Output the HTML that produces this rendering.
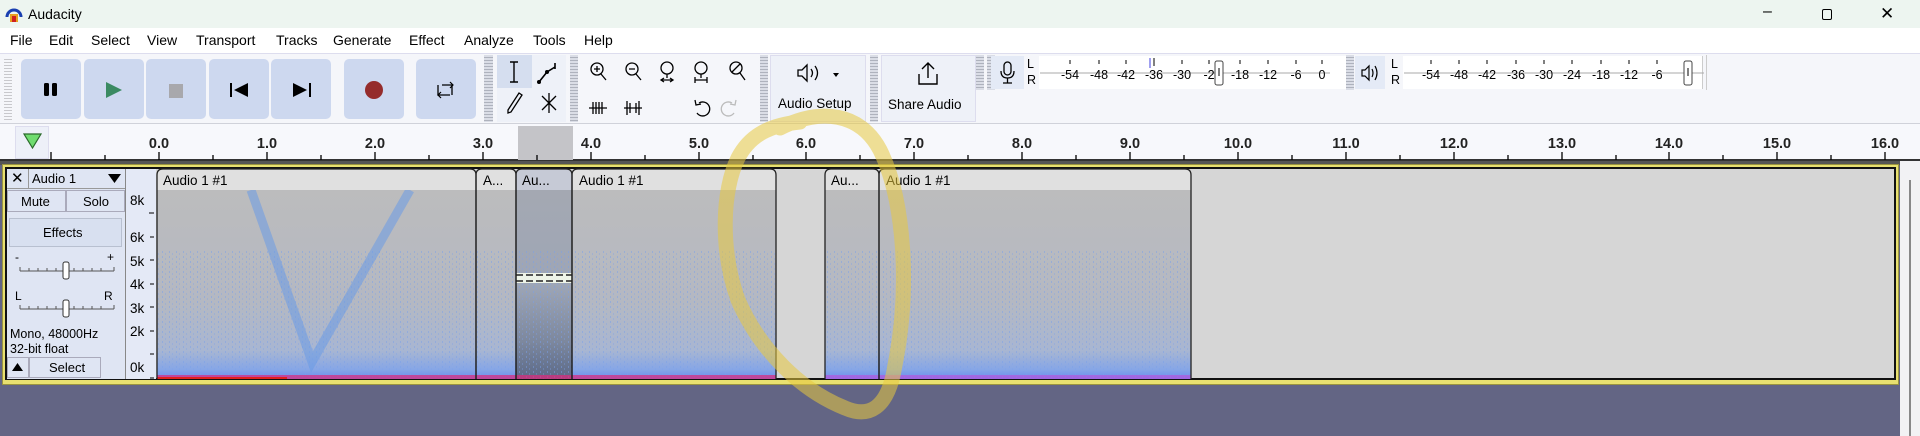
<!DOCTYPE html>
<html><head><meta charset="utf-8"><style>
*{margin:0;padding:0;box-sizing:border-box}
body{width:1920px;height:436px;overflow:hidden;background:#636584;font-family:"Liberation Sans",sans-serif;position:relative;color:#000}
.a{position:absolute}
.btn{position:absolute;background:#cdd8ef;border-radius:5px}
.t{position:absolute;white-space:nowrap}
</style></head><body>
<div class="a" style="left:0;top:0;width:1920px;height:28px;background:#edf5f0"></div>
<svg class="a" style="left:5px;top:5px" width="18" height="18"><path d="M2 12 A7 7 0 0 1 16 12" fill="none" stroke="#1a3fb0" stroke-width="3"/><rect x="5" y="9" width="8" height="8" fill="#e8a020"/><rect x="7" y="11" width="4" height="6" fill="#d02020"/></svg>
<div class="t" style="left:28px;top:6px;font-size:14px">Audacity</div>
<div class="t" style="left:1763px;top:3px;font-size:16px">–</div>
<div class="a" style="left:1822px;top:9px;width:10px;height:11px;border:1.5px solid #000;border-radius:2px"></div>
<div class="t" style="left:1880px;top:4px;font-size:17px">✕</div>
<div class="a" style="left:0;top:28px;width:1920px;height:25px;background:#fff"></div>
<div style="position:absolute;top:32px;font-size:14px">
<span class="t" style="left:10px">File</span><span class="t" style="left:49px">Edit</span><span class="t" style="left:91px">Select</span><span class="t" style="left:147px">View</span><span class="t" style="left:196px">Transport</span><span class="t" style="left:276px">Tracks</span><span class="t" style="left:333px">Generate</span><span class="t" style="left:409px">Effect</span><span class="t" style="left:464px">Analyze</span><span class="t" style="left:533px">Tools</span><span class="t" style="left:584px">Help</span></div>
<div class="a" style="left:0;top:53px;width:1920px;height:71px;background:#f5f6fa;border-top:1px solid #dde;border-bottom:1px solid #d0d2da"></div>
<div class="a" style="left:4px;top:57px;width:8px;height:63px;background:repeating-linear-gradient(#f5f6fa 0 2px,#c8c8cc 2px 3px)"></div>
<div class="btn" style="left:21px;top:59px;width:60px;height:60px"></div>
<div class="btn" style="left:84px;top:59px;width:60px;height:60px"></div>
<div class="btn" style="left:146px;top:59px;width:60px;height:60px"></div>
<div class="btn" style="left:209px;top:59px;width:60px;height:60px"></div>
<div class="btn" style="left:271px;top:59px;width:60px;height:60px"></div>
<div class="btn" style="left:344px;top:59px;width:60px;height:60px"></div>
<div class="btn" style="left:416px;top:59px;width:60px;height:60px"></div>
<svg class="a" style="left:0;top:53px" width="500" height="71">
<rect x="44" y="30" width="5" height="13" rx="1.5"/><rect x="52" y="30" width="5" height="13" rx="1.5"/>
<path d="M106 29 L122 37 L106 45Z" fill="#3b8a62"/>
<rect x="169" y="31" width="14" height="14" fill="#a8a8ac"/>
<rect x="230" y="30" width="2" height="14"/><path d="M248 30 L234 37 L248 44Z"/>
<path d="M293 30 L307 37 L293 44Z"/><rect x="309" y="30" width="2" height="14"/>
<circle cx="374" cy="37" r="9" fill="#952c2c"/>
<path d="M442 32 h10 v10 M450 42 h-12 v-10" fill="none" stroke="#000" stroke-width="1.3"/><path d="M450 29 l3 3 l-3 3 M441 39 l-3 3 l3 3" fill="none" stroke="#000" stroke-width="1.2"/>
</svg>
<div class="a" style="left:484px;top:55px;width:9px;height:67px;background:repeating-linear-gradient(#dadde6 0 2px,#aeb2bd 2px 3px)"></div>
<div class="a" style="left:497px;top:55px;width:35px;height:33px;background:#d5deef"></div>
<div class="a" style="left:532px;top:55px;width:34px;height:33px;background:#eef1f8"></div>
<div class="a" style="left:497px;top:88px;width:35px;height:34px;background:#eef1f8"></div>
<div class="a" style="left:532px;top:88px;width:34px;height:34px;background:#eef1f8"></div>
<svg class="a" style="left:497px;top:55px" width="70" height="67">
<path d="M17 7 V27 M13 7 H21 M13 27 H21" stroke="#000" stroke-width="1.4" fill="none"/>
<path d="M42 27 L50 17 L58 12 M58 8 V14" stroke="#000" stroke-width="1.6" fill="none"/><circle cx="42" cy="27" r="2"/><circle cx="50" cy="17" r="2"/>
<path d="M11 55 L22 38 L25 40 L14 57 L11 58 Z" fill="none" stroke="#000" stroke-width="1.3"/>
<path d="M52 38 V58 M45 41 L59 55 M59 41 L45 55" stroke="#000" stroke-width="1.3"/>
</svg>
<div class="a" style="left:570px;top:55px;width:8px;height:67px;background:repeating-linear-gradient(#dadde6 0 2px,#aeb2bd 2px 3px)"></div>
<svg class="a" style="left:581px;top:55px" width="180" height="67">
<g fill="none" stroke="#000" stroke-width="1.3">
<circle cx="16" cy="14" r="6"/><path d="M20 19 L25 25 M13 14 h6 M16 11 v6"/>
<circle cx="51" cy="14" r="6"/><path d="M55 19 L60 25 M48 14 h6"/>
<circle cx="86" cy="13" r="6"/><path d="M86 19 v4 M80 25 h12 M83 23 l-3 2 l3 2 M89 23 l3 2 l-3 2"/>
<circle cx="120" cy="13" r="6"/><path d="M120 19 v4 M114 25 h12 M114 22 v6 M126 22 v6"/>
<circle cx="155" cy="13" r="6"/><path d="M159 18 L164 25 M151 17 L159 9"/>
<path d="M8 53 h18 M12 47 v12 M15 47 v12 M18 47 v12 M21 47 v12"/>
<path d="M43 53 h18 M46 46 v14 M58 46 v14 M49 48 v10 M55 48 v10"/>
<path d="M118 48 a7 7 0 1 1 -2 10 M114 45 l1 5 l5 -1"/>
</g>
<path d="M151 48 a7 7 0 1 0 2 10 M155 45 l-1 5 l-5 -1" fill="none" stroke="#bbb" stroke-width="1.3"/>
</svg>
<div class="a" style="left:760px;top:55px;width:8px;height:67px;background:repeating-linear-gradient(#dadde6 0 2px,#aeb2bd 2px 3px)"></div>
<div class="a" style="left:770px;top:55px;width:96px;height:67px;background:#eef1f8;border:1px solid #dde"></div>
<svg class="a" style="left:795px;top:62px" width="50" height="24"><path d="M3 8 h4 l5 -5 v16 l-5 -5 h-4z M16 7 q3 4 0 8 M20 4 q5 7 0 14" fill="none" stroke="#000" stroke-width="1.3"/><path d="M38 11 l3 4 l3 -4z"/></svg>
<div class="t" style="left:778px;top:96px;font-size:13.5px">Audio Setup</div>
<div class="a" style="left:870px;top:55px;width:8px;height:67px;background:repeating-linear-gradient(#dadde6 0 2px,#aeb2bd 2px 3px)"></div>
<div class="a" style="left:881px;top:55px;width:95px;height:67px;background:#eef1f8;border:1px solid #dde"></div>
<svg class="a" style="left:915px;top:60px" width="26" height="28"><path d="M13 3 V18 M7 9 L13 3 L19 9 M4 14 V24 H22 V14" fill="none" stroke="#000" stroke-width="1.4"/></svg>
<div class="t" style="left:888px;top:97px;font-size:13.5px">Share Audio</div>
<div class="a" style="left:976px;top:55px;width:8px;height:35px;background:repeating-linear-gradient(#dadde6 0 2px,#aeb2bd 2px 3px)"></div>
<div class="a" style="left:987px;top:55px;width:8px;height:35px;background:repeating-linear-gradient(#dadde6 0 2px,#aeb2bd 2px 3px)"></div>
<div class="a" style="left:991px;top:56px;width:33px;height:33px;background:#e4eaf6"></div>
<svg class="a" style="left:998px;top:60px" width="20" height="26"><rect x="6" y="2" width="7" height="13" rx="3.5" fill="none" stroke="#000" stroke-width="1.3"/><path d="M3 11 q0 7 6.5 7 q6.5 0 6.5 -7 M9.5 18 v5 M5 23 h9" fill="none" stroke="#000" stroke-width="1.3"/></svg>
<div class="a" style="left:1039px;top:56px;width:310px;height:33px;background:#fff;border-right:1px solid #ccc"></div>
<div class="a" style="left:1346px;top:55px;width:8px;height:35px;background:repeating-linear-gradient(#dadde6 0 2px,#aeb2bd 2px 3px)"></div>
<div class="a" style="left:1355px;top:56px;width:30px;height:33px;background:#e4eaf6"></div>
<svg class="a" style="left:1360px;top:62px" width="22" height="22"><path d="M2 8 h3 l4 -4 v14 l-4 -4 h-3z M12 7 q2 4 0 8 M15 4 q4 7 0 14" fill="none" stroke="#000" stroke-width="1.2"/></svg>
<div class="a" style="left:1403px;top:56px;width:300px;height:33px;background:#fff;border-right:1px solid #ccc"></div>
<div class="a" style="left:1706px;top:55px;width:214px;height:35px;border-left:1px solid #ccc"></div>
<svg class="a" style="left:1024px;top:56px" width="700" height="34" font-family="Liberation Sans" font-size="12.5">
<text x="3" y="12">L</text><text x="3" y="28">R</text>
<text x="367" y="12">L</text><text x="367" y="28">R</text>
<path d="M16 17 H306 M380 17 H680" stroke="#aaa"/>
<g text-anchor="middle">
<text x="46" y="23">-54</text><text x="75" y="23">-48</text><text x="102" y="23">-42</text><text x="130" y="23">-36</text><text x="158" y="23">-30</text><text x="185" y="23">-2</text><text x="216" y="23">-18</text><text x="244" y="23">-12</text><text x="272" y="23">-6</text><text x="298" y="23">0</text>
<text x="407" y="23">-54</text><text x="435" y="23">-48</text><text x="463" y="23">-42</text><text x="492" y="23">-36</text><text x="520" y="23">-30</text><text x="548" y="23">-24</text><text x="577" y="23">-18</text><text x="605" y="23">-12</text><text x="633" y="23">-6</text></g>
<path d="M46 4v4M75 4v4M102 4v4M130 2v8M158 4v4M185 4v4M216 4v4M244 4v4M272 4v4M298 4v4M407 4v4M435 4v4M463 4v4M492 4v4M520 4v4M548 4v4M577 4v4M605 4v4M633 4v4" stroke="#000"/>
<path d="M126 2v10" stroke="#4040e0"/>
<rect x="191" y="5" width="8" height="24" rx="2" fill="#fff" stroke="#444"/><path d="M195 12v8" stroke="#000"/>
<rect x="660" y="5" width="8" height="24" rx="2" fill="#fff" stroke="#444"/><path d="M664 12v8" stroke="#000"/>
</svg>
<div class="a" style="left:0;top:124px;width:1920px;height:37px;background:#f7f8fc;border-bottom:2px solid #333"></div>
<div class="a" style="left:15px;top:126px;width:34px;height:33px;background:#edf0f8;border:1px solid #dde"></div>
<svg class="a" style="left:23px;top:133px" width="20" height="16"><path d="M1 1 H18 L9.5 15Z" fill="#6fdc6f" stroke="#2a6a2a" stroke-width="1.2"/></svg>
<div class="a" style="left:518px;top:126px;width:55px;height:34px;background:#c4c4c8"></div>
<svg class="a" style="left:0;top:124px" width="1920" height="37" font-family="Liberation Sans" font-size="14.5" font-weight="bold">
<g text-anchor="middle" fill="#222">
<text x="159" y="24">0.0</text><text x="267" y="24">1.0</text><text x="375" y="24">2.0</text><text x="483" y="24">3.0</text><text x="591" y="24">4.0</text><text x="699" y="24">5.0</text><text x="806" y="24">6.0</text><text x="914" y="24">7.0</text><text x="1022" y="24">8.0</text><text x="1130" y="24">9.0</text><text x="1238" y="24">10.0</text><text x="1346" y="24">11.0</text><text x="1454" y="24">12.0</text><text x="1562" y="24">13.0</text><text x="1669" y="24">14.0</text><text x="1777" y="24">15.0</text><text x="1885" y="24">16.0</text></g>
<g stroke="#000" stroke-width="1.3">
<path d="M51 28v8M105 31v5M159 28v8M213 31v5M267 28v8M321 31v5M375 28v8M429 31v5M483 28v8M537 31v5M591 28v8M645 31v5M699 28v8M753 31v5M806 28v8M860 31v5M914 28v8M968 31v5M1022 28v8M1076 31v5M1130 28v8M1184 31v5M1238 28v8M1292 31v5M1346 28v8M1400 31v5M1454 28v8M1508 31v5M1562 28v8M1616 31v5M1669 28v8M1723 31v5M1777 28v8M1831 31v5M1885 28v8"/></g>
</svg>
<div class="a" style="left:0;top:161px;width:1920px;height:4px;background:#555"></div>
<div class="a" style="left:2px;top:164px;width:1897px;height:221px;background:#e8e070;border:1px solid #9a9440"></div>
<div class="a" style="left:5px;top:167px;width:1891px;height:213px;background:#d6d6d6;border:2px solid #111"></div>
<div class="a" style="left:1900px;top:161px;width:20px;height:275px;background:#f2f2f4"></div>
<div class="a" style="left:1909px;top:180px;width:2px;height:256px;background:#888"></div>
<div class="a" style="left:7px;top:169px;width:118px;height:210px;background:#dfe5f3"></div>
<div class="a" style="left:7px;top:169px;width:118px;height:20px;border-bottom:1px solid #999"></div>
<div class="t" style="left:11px;top:169px;font-size:15px">✕</div>
<div class="a" style="left:28px;top:169px;width:1px;height:20px;background:#999"></div>
<div class="t" style="left:32px;top:171px;font-size:13px">Audio 1</div>
<svg class="a" style="left:108px;top:174px" width="14" height="10"><path d="M0 0 H13 L6.5 9Z"/></svg>
<div class="a" style="left:7px;top:190px;width:59px;height:22px;border:1px solid #aab;background:#dfe5f3"></div>
<div class="a" style="left:66px;top:190px;width:59px;height:22px;border:1px solid #aab;background:#dfe5f3"></div>
<div class="t" style="left:21px;top:194px;font-size:13px">Mute</div>
<div class="t" style="left:83px;top:194px;font-size:13px">Solo</div>
<div class="a" style="left:9px;top:218px;width:113px;height:29px;background:#d8e0f0;border:1px solid #b8c0d0"></div>
<div class="t" style="left:43px;top:225px;font-size:13px">Effects</div>
<svg class="a" style="left:12px;top:252px" width="110" height="70" font-family="Liberation Sans" font-size="12">
<text x="3" y="9">-</text><text x="95" y="9">+</text>
<path d="M8 19 H102 M8 15v4M17 16v3M26 16v3M35 16v3M44 16v3M62 16v3M71 16v3M80 16v3M89 16v3M102 15v4" stroke="#555"/>
<rect x="51" y="10" width="6" height="17" rx="2" fill="#fff" stroke="#333"/>
<text x="3" y="48">L</text><text x="92" y="48">R</text>
<path d="M8 57 H102 M8 53v4M17 54v3M26 54v3M35 54v3M44 54v3M62 54v3M71 54v3M80 54v3M89 54v3M102 53v4" stroke="#555"/>
<rect x="51" y="48" width="6" height="17" rx="2" fill="#fff" stroke="#333"/>
</svg>
<div class="t" style="left:10px;top:327px;font-size:12.5px">Mono, 48000Hz</div>
<div class="t" style="left:10px;top:342px;font-size:12.5px">32-bit float</div>
<div class="a" style="left:7px;top:357px;width:22px;height:21px;border:1px solid #aab"></div>
<svg class="a" style="left:12px;top:362px" width="12" height="10"><path d="M0 9 H11 L5.5 1Z"/></svg>
<div class="a" style="left:29px;top:357px;width:72px;height:21px;border:1px solid #aab;background:#dfe5f3"></div>
<div class="t" style="left:49px;top:360px;font-size:13px">Select</div>
<div class="a" style="left:125px;top:169px;width:31px;height:210px;background:#e4e9f6;border-left:1px solid #888"></div>
<svg class="a" style="left:125px;top:169px" width="31" height="210" font-family="Liberation Sans" font-size="13.5">
<text x="5" y="36">8k</text><text x="5" y="73">6k</text><text x="5" y="97">5k</text><text x="5" y="120">4k</text><text x="5" y="144">3k</text><text x="5" y="167">2k</text><text x="5" y="203">0k</text>
<path d="M24 44h5M25 68h4M25 91h4M25 115h4M25 138h4M25 162h4M25 185h4M25 209h4" stroke="#000"/>
</svg>
<svg class="a" style="left:0;top:0" width="1920" height="436" font-family="Liberation Sans" font-size="13.5">
<defs>
<linearGradient id="sp" x1="0" y1="0" x2="0" y2="1"><stop offset="0" stop-color="#bcbcbd"/><stop offset="0.6" stop-color="#b4b8c2"/><stop offset="0.85" stop-color="#a8b6d2"/><stop offset="0.95" stop-color="#86a6e6"/><stop offset="1" stop-color="#6a8cf0"/></linearGradient>
<linearGradient id="sp2" x1="0" y1="0" x2="0" y2="1"><stop offset="0" stop-color="#a4a8b2"/><stop offset="0.5" stop-color="#9ea6b6"/><stop offset="0.8" stop-color="#7d889e"/><stop offset="1" stop-color="#5c6a88"/></linearGradient>
<pattern id="sk" width="7" height="5" patternUnits="userSpaceOnUse"><rect x="1" y="1" width="1" height="2" fill="#7aa0ea" opacity="0.5"/><rect x="4" y="3" width="1" height="2" fill="#7aa0ea" opacity="0.35"/></pattern>
</defs>
<rect x="157" y="190" width="319" height="189" fill="url(#sp)"/>
<rect x="476" y="190" width="40" height="189" fill="url(#sp)"/>
<rect x="516" y="190" width="56" height="189" fill="url(#sp2)"/>
<rect x="572" y="190" width="204" height="189" fill="url(#sp)"/>
<rect x="825" y="190" width="54" height="189" fill="url(#sp)"/>
<rect x="879" y="190" width="312" height="189" fill="url(#sp)"/>
<rect x="157" y="250" width="619" height="129" fill="url(#sk)"/>
<rect x="825" y="250" width="366" height="129" fill="url(#sk)"/>
<path d="M251 190 L312 362 L410 190" fill="none" stroke="#6a9ae6" stroke-width="9" opacity="0.55"/>
<rect x="157" y="375" width="619" height="4" fill="#e0287a" opacity="0.7"/>
<rect x="157" y="377" width="130" height="2" fill="#e02020"/>
<rect x="825" y="375" width="366" height="4" fill="#c04cd8" opacity="0.6"/>
<rect x="516" y="273" width="56" height="10" fill="#eef4e8"/>
<path d="M516 275h56M516 281h56" stroke="#222" stroke-width="1.5" stroke-dasharray="7 3"/>
<g fill="#e0e0e0">
<path d="M157 190 V175 q0 -6 6 -6 H470 q6 0 6 6 V190Z"/>
<path d="M476 190 V175 q0 -6 6 -6 H510 q6 0 6 6 V190Z"/>
<path d="M516 190 V175 q0 -6 6 -6 H566 q6 0 6 6 V190Z" fill="#c6cad6"/>
<path d="M572 190 V175 q0 -6 6 -6 H770 q6 0 6 6 V190Z"/>
<path d="M825 190 V175 q0 -6 6 -6 H873 q6 0 6 6 V190Z"/>
<path d="M879 190 V175 q0 -6 6 -6 H1185 q6 0 6 6 V190Z"/>
</g>
<g fill="none" stroke="#222" stroke-width="1.3">
<path d="M157 379 V175 q0 -6 6 -6 H470 q6 0 6 6 V379"/>
<path d="M476 379 V175 q0 -6 6 -6 H510 q6 0 6 6 V379"/>
<path d="M516 379 V175 q0 -6 6 -6 H566 q6 0 6 6 V379"/>
<path d="M572 379 V175 q0 -6 6 -6 H770 q6 0 6 6 V379"/>
<path d="M825 379 V175 q0 -6 6 -6 H873 q6 0 6 6 V379"/>
<path d="M879 379 V175 q0 -6 6 -6 H1185 q6 0 6 6 V379"/>
</g>
<text x="163" y="185">Audio 1 #1</text><text x="483" y="185">A...</text><text x="522" y="185">Au...</text><text x="579" y="185">Audio 1 #1</text><text x="831" y="185">Au...</text><text x="886" y="185">Audio 1 #1</text>
<path d="M780 128 C820 108 860 112 880 150 C905 200 910 290 895 365 C888 410 868 418 845 408 C800 390 760 350 738 300 C720 250 722 190 738 158 C750 135 770 125 800 122" fill="none" stroke="#e8c840" stroke-width="15" stroke-linecap="round" opacity="0.55"/>
</svg>
</body></html>
